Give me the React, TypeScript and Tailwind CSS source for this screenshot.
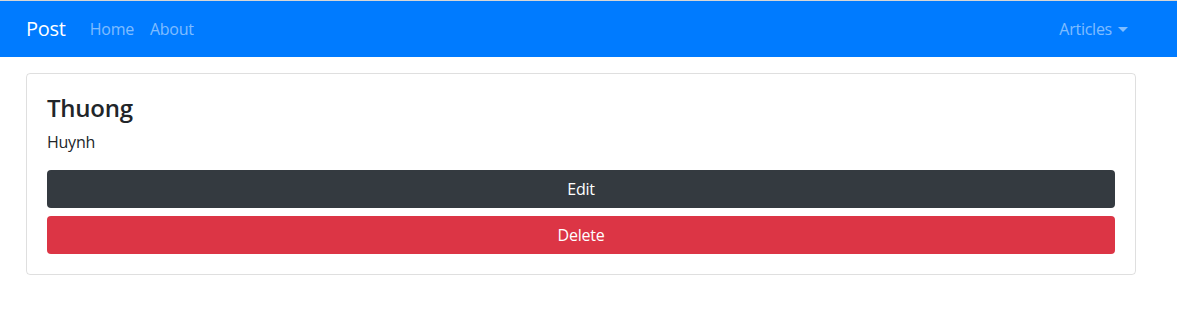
export default function App() {
  return (
    <div className="min-h-[313px] bg-white text-[#212529] font-['Open_Sans','Noto_Sans',sans-serif] text-[16px] leading-[24px] tracking-[-0.25px]">
      {/* top hairline */}
      <div className="h-px bg-[#d6d6d6]" />

      <nav className="h-[56px] bg-[#007bff] py-2">
        <div className="ml-[26px] w-[1110px] flex items-center">
          <a className="py-[5px] mr-4 text-[20px] leading-[30px] text-white">Post</a>
          <a className="px-2 py-2 text-[rgba(255,255,255,0.5)]">Home</a>
          <a className="px-2 py-2 text-[rgba(255,255,255,0.5)]">About</a>
          <a className="ml-auto px-2 py-2 flex items-center text-[rgba(255,255,255,0.5)]">
            Articles
            <span className="ml-[6px] mt-[1px] w-0 h-0 border-t-[5px] border-x-[5px] border-t-[rgba(255,255,255,0.5)] border-x-transparent" />
          </a>
        </div>
      </nav>

      <div className="ml-[26px] w-[1110px] mt-4">
        <div className="border border-[rgba(0,0,0,0.125)] rounded-[4px] p-5">
          <h4 className="text-[24px] leading-[28px] font-semibold mb-2">Thuong</h4>
          <p className="mb-4">Huynh</p>
          <button className="w-full h-[38px] rounded-[4px] bg-[#343a40] text-white mb-2">Edit</button>
          <button className="w-full h-[38px] rounded-[4px] bg-[#dc3545] text-white block">Delete</button>
        </div>
      </div>
    </div>
  );
}
